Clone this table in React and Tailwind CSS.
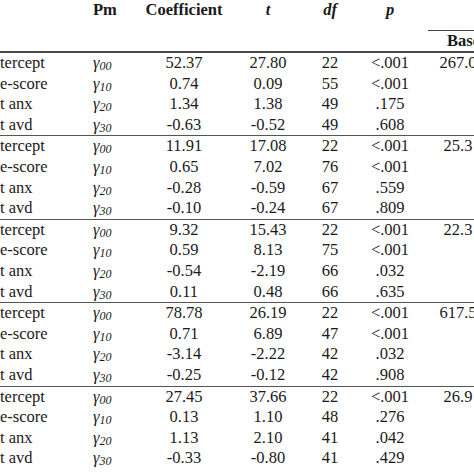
import React from 'react'

const blocks = [
  { base: '267.0', rows: [
    ['tercept', '00', '52.37', '27.80', '22', '<.001'],
    ['e-score', '10', '0.74', '0.09', '55', '<.001'],
    ['t anx', '20', '1.34', '1.38', '49', '.175'],
    ['t avd', '30', '-0.63', '-0.52', '49', '.608'],
  ]},
  { base: '25.3', rows: [
    ['tercept', '00', '11.91', '17.08', '22', '<.001'],
    ['e-score', '10', '0.65', '7.02', '76', '<.001'],
    ['t anx', '20', '-0.28', '-0.59', '67', '.559'],
    ['t avd', '30', '-0.10', '-0.24', '67', '.809'],
  ]},
  { base: '22.3', rows: [
    ['tercept', '00', '9.32', '15.43', '22', '<.001'],
    ['e-score', '10', '0.59', '8.13', '75', '<.001'],
    ['t anx', '20', '-0.54', '-2.19', '66', '.032'],
    ['t avd', '30', '0.11', '0.48', '66', '.635'],
  ]},
  { base: '617.5', rows: [
    ['tercept', '00', '78.78', '26.19', '22', '<.001'],
    ['e-score', '10', '0.71', '6.89', '47', '<.001'],
    ['t anx', '20', '-3.14', '-2.22', '42', '.032'],
    ['t avd', '30', '-0.25', '-0.12', '42', '.908'],
  ]},
  { base: '26.9', rows: [
    ['tercept', '00', '27.45', '37.66', '22', '<.001'],
    ['e-score', '10', '0.13', '1.10', '48', '.276'],
    ['t anx', '20', '1.13', '2.10', '41', '.042'],
    ['t avd', '30', '-0.33', '-0.80', '41', '.429'],
  ]},
]

function Gamma({ sub }) {
  return (
    <span className="italic">
      γ<span className="text-[12px] relative top-[2px]">{sub}</span>
    </span>
  )
}

function Row({ r, base }) {
  return (
    <div className="flex h-[20.6px] items-center">
      <div className="w-[70px] shrink-0 text-left">{r[0]}</div>
      <div className="w-[70px] shrink-0 pl-[23px]"><Gamma sub={r[1]} /></div>
      <div className="w-[88px] shrink-0 text-center">{r[2]}</div>
      <div className="w-[80px] shrink-0 text-center">{r[3]}</div>
      <div className="w-[44px] shrink-0 text-center">{r[4]}</div>
      <div className="w-[76px] shrink-0 text-center">{r[5]}</div>
      <div className="w-[74px] shrink-0 text-center pr-[14px]">{base}</div>
    </div>
  )
}

export default function App() {
  return (
    <div className="w-[474px] h-[474px] overflow-hidden bg-white text-[#1a1a1a] text-[16.5px] leading-none" style={{ fontFamily: '"Liberation Serif", "Times New Roman", serif' }}>
      <div className="w-[502px]">
        <div className="flex h-[21px] items-center font-bold">
          <div className="w-[70px] shrink-0"></div>
          <div className="w-[70px] shrink-0 pl-[23px]">Pm</div>
          <div className="w-[88px] shrink-0 text-center">Coefficient</div>
          <div className="w-[80px] shrink-0 text-center italic">t</div>
          <div className="w-[44px] shrink-0 text-center italic">df</div>
          <div className="w-[76px] shrink-0 text-center italic">p</div>
          <div className="w-[74px] shrink-0"></div>
        </div>
        <div className="flex h-[30px]">
          <div className="w-[428px] shrink-0"></div>
          <div className="w-[74px] shrink-0 mt-[9px] border-t-[1.5px] border-[#444] flex items-center pl-[19px] font-bold">Baseline</div>
        </div>
        {blocks.map((b, i) => (
          <div key={i} className={i === 0 ? 'border-t-2 border-[#4a4a4a]' : 'border-t-[1.5px] border-[#555]'}>
            {b.rows.map((r, j) => (
              <Row key={j} r={r} base={j === 0 ? b.base : ''} />
            ))}
          </div>
        ))}
      </div>
    </div>
  )
}
